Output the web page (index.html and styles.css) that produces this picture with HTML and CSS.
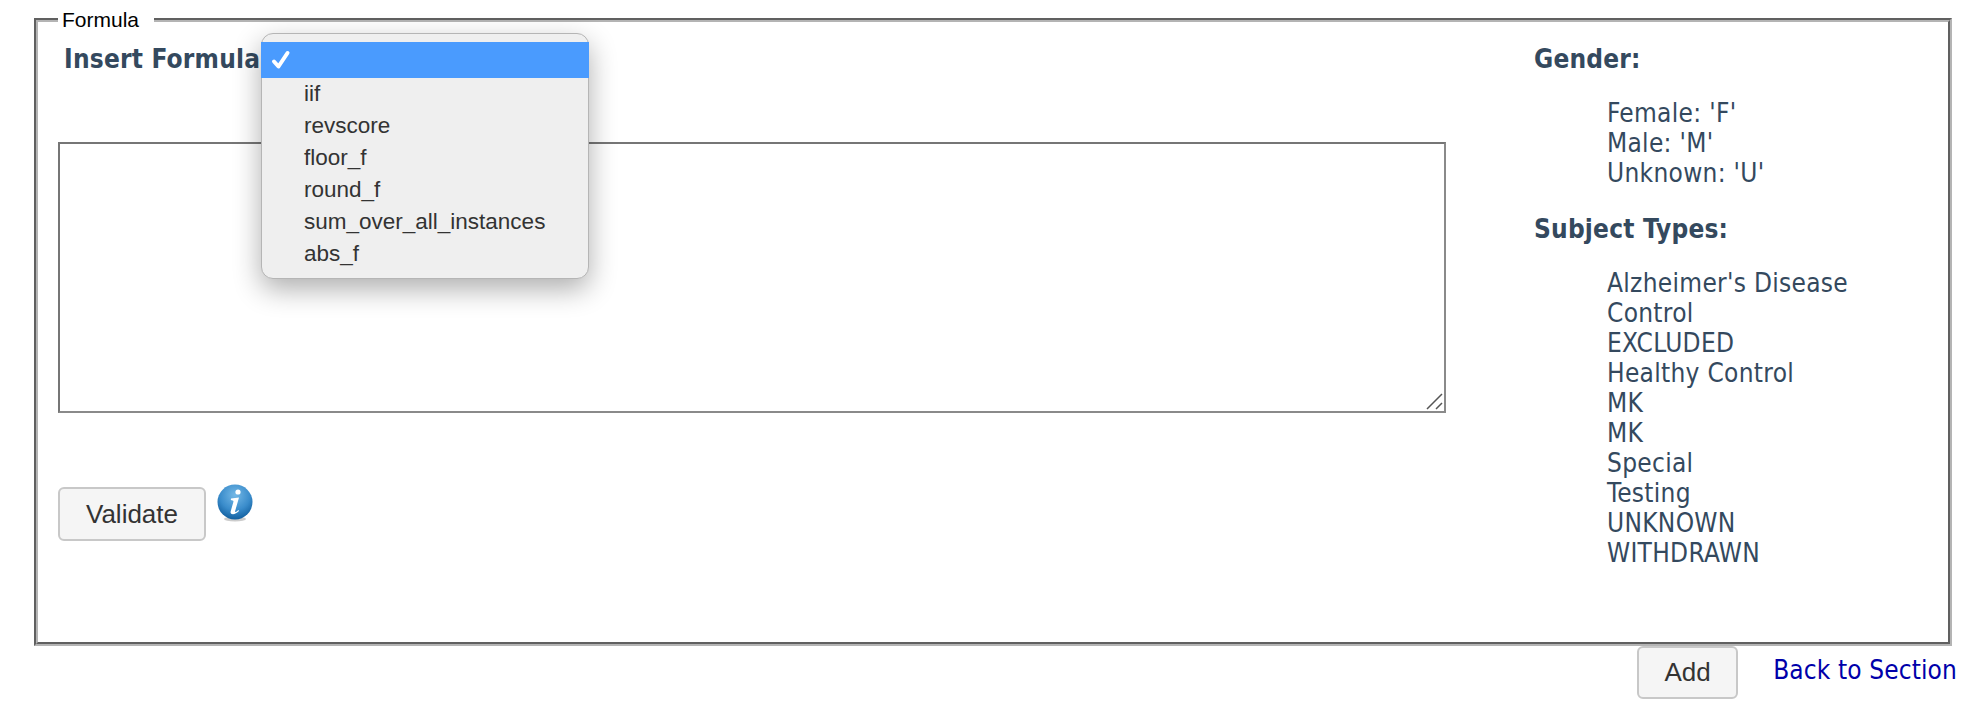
FILE: index.html
```html
<!DOCTYPE html>
<html lang="en">
<head>
<meta charset="utf-8">
<title>Formula</title>
<link rel="stylesheet" href="styles.css">
</head>
<body>
<div class="page">
  <fieldset class="formula">
    <legend class="formula-legend">Formula</legend>
    <div class="formula-body">
      <div class="editor">
        <div class="insert-row">
          <label class="strong-label">Insert Formula</label>
          <div class="menu">
            <div class="menu-item selected">
              <svg class="check" width="20" height="20" viewBox="0 0 20 20"><path d="M3 11.5 7.5 16.5 16.5 3" stroke="#fff" stroke-width="4" stroke-linecap="round" stroke-linejoin="round" fill="none"/></svg>
            </div>
            <div class="menu-item">iif</div>
            <div class="menu-item">revscore</div>
            <div class="menu-item">floor_f</div>
            <div class="menu-item">round_f</div>
            <div class="menu-item">sum_over_all_instances</div>
            <div class="menu-item">abs_f</div>
          </div>
        </div>
        <div class="textarea">
          <svg class="grip" width="17" height="17" viewBox="0 0 17 17"><path d="M1 16 16 1M10 16 16 10" stroke="#555" stroke-width="1.5" fill="none"/></svg>
        </div>
        <div class="validate-row">
          <button class="btn btn-validate" type="button">Validate</button>
          <svg class="info" width="36" height="38" viewBox="0 0 36 38">
            <defs>
              <radialGradient id="ball" cx="50%" cy="30%" r="72%">
                <stop offset="0" stop-color="#74b8e6"/>
                <stop offset="0.6" stop-color="#3a8ccb"/>
                <stop offset="1" stop-color="#0f5c9c"/>
              </radialGradient>
            </defs>
            <ellipse cx="18" cy="35" rx="11" ry="2.5" fill="#999" opacity="0.5"/>
            <circle cx="18" cy="18" r="17.5" fill="url(#ball)"/>
            <circle cx="21" cy="8" r="2.6" fill="#fff"/>
            <path d="M14 14.5 22 13.5 18 27.5C18 28.5 19.5 28 21.5 26L22 27C19 30.5 13.5 31.5 13.5 28L16.5 17.5C16.5 16.3 15 16.3 13.8 16Z" fill="#fff"/>
          </svg>
        </div>
      </div>
      <aside class="legend-col">
        <h4 class="strong-label">Gender:</h4>
        <ul class="values">
          <li>Female: 'F'</li>
          <li>Male: 'M'</li>
          <li>Unknown: 'U'</li>
        </ul>
        <h4 class="strong-label">Subject Types:</h4>
        <ul class="values">
          <li>Alzheimer's Disease</li>
          <li>Control</li>
          <li>EXCLUDED</li>
          <li>Healthy Control</li>
          <li>MK</li>
          <li>MK</li>
          <li>Special</li>
          <li>Testing</li>
          <li>UNKNOWN</li>
          <li>WITHDRAWN</li>
        </ul>
      </aside>
    </div>
  </fieldset>
  <div class="actions">
    <button class="btn btn-add" type="button">Add</button>
    <a class="back" href="#">Back to Section</a>
  </div>
</div>
</body>
</html>
```
FILE: styles.css
```css
* { box-sizing: border-box; }
html, body { margin: 0; background: #fff; }
body {
  font-family: "DejaVu Sans", sans-serif;
  font-stretch: condensed;
  font-size: 26px;
  letter-spacing: 0.3px;
  line-height: 30px;
  color: #34495e;
}
.page { width: 1980px; height: 710px; padding: 8px 23px 0 34px; overflow: hidden; }
.formula {
  margin: 0 5px 0 0;
  padding: 0;
  min-width: 0;
  height: 638px;
  border: 4px groove #b4b4b4;
}
.formula-legend {
  margin-left: 20px;
  padding: 0 15px 0 4px;
  font-family: "Liberation Sans", sans-serif;
  font-stretch: normal;
  font-size: 21px;
  letter-spacing: 0;
  line-height: 24px;
  color: #000;
}
.formula-body { display: flex; padding: 0 0 0 20px; }
.editor { width: 1388px; }
.insert-row { position: relative; height: 110px; padding: 12px 0 0 6px; }
.strong-label { margin: 0; font-weight: 700; font-size: 26px; letter-spacing: 0.2px; line-height: 30px; color: #34495e; }
.menu {
  position: absolute;
  left: 203px;
  top: 1px;
  width: 328px;
  height: 246px;
  padding: 8px 0;
  background: #efefef;
  border: 1px solid #b5b5b5;
  border-radius: 12px;
  box-shadow: 0 10px 28px rgba(0,0,0,.32);
  font-family: "Liberation Sans", sans-serif;
  font-stretch: normal;
  font-size: 22.5px;
  letter-spacing: 0;
  color: #333;
  z-index: 2;
}
.menu-item { height: 32px; line-height: 32px; padding-left: 42px; }
.menu-item.selected { display: flex; align-items: center; height: 36px; margin: 0 -1px 0; padding-left: 10px; background: #4a9bfe; color: #fff; }
.textarea {
  position: relative;
  width: 1388px;
  height: 271px;
  background: #fff;
  border: 2px solid #8a8a8a;
  border-top-color: #767676;
  border-left-color: #767676;
}
.grip { position: absolute; right: 1px; bottom: 1px; }
.validate-row { display: flex; align-items: flex-start; gap: 11px; margin-top: 74px; position: relative; }
.btn {
  background: #f5f5f5;
  border: 2px solid #c8c8c8;
  border-radius: 6px;
  font-family: "Liberation Sans", sans-serif;
  font-stretch: normal;
  font-size: 26px;
  letter-spacing: 0;
  color: #333;
  padding: 0;
}
.btn-validate { width: 148px; height: 54px; }
.info { margin-top: -3px; }
.legend-col { margin-left: 88px; padding-top: 12px; }
.values { list-style: none; margin: 0; padding: 24px 0 26px 73px; }
.actions { display: flex; justify-content: flex-end; align-items: flex-start; height: 56px; gap: 35px; }
.btn-add { width: 101px; height: 53px; }
.back { color: #0000aa; text-decoration: none; font-size: 26px; letter-spacing: 0.12px; margin-top: 9px; }
```
